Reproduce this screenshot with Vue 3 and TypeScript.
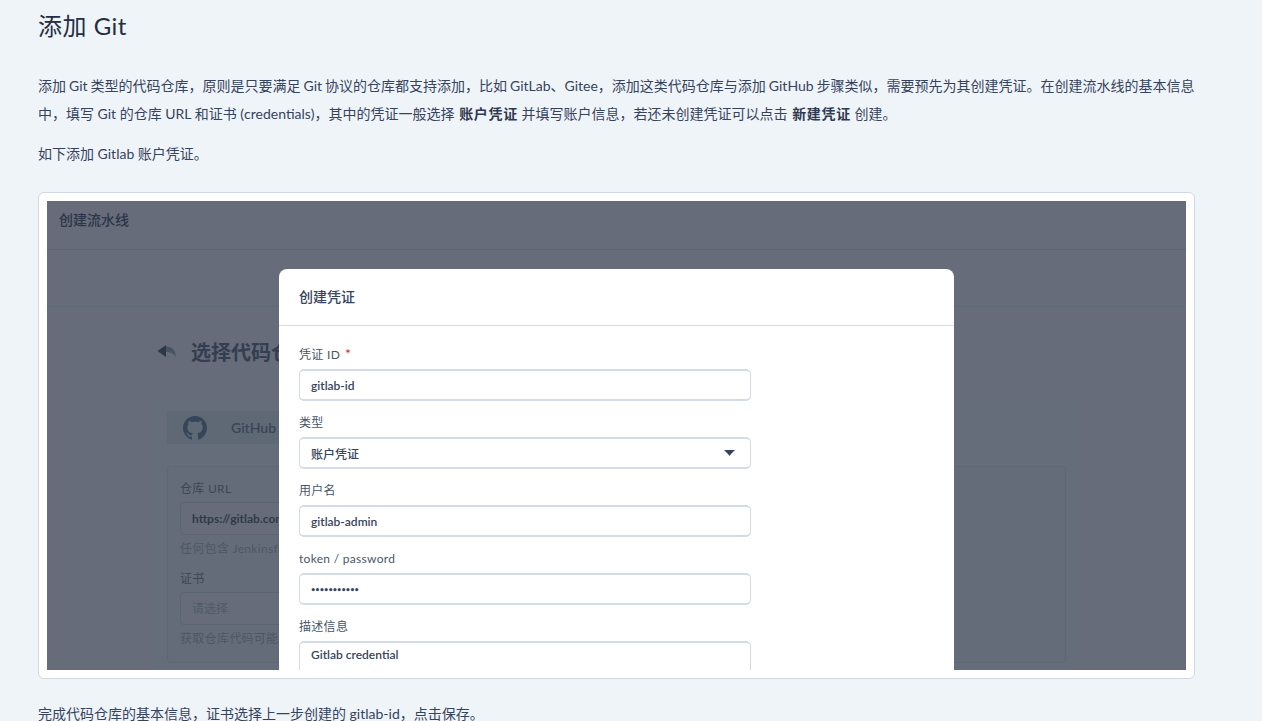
<script setup lang="ts">
interface Field {
  label: string
  value: string
  required?: boolean
  select?: boolean
  dots?: boolean
  multi?: boolean
}
const fields: Field[] = [
  { label: '凭证 ID', value: 'gitlab-id', required: true },
  { label: '类型', value: '账户凭证', select: true },
  { label: '用户名', value: 'gitlab-admin' },
  { label: 'token / password', value: '•••••••••••', dots: true },
  { label: '描述信息', value: 'Gitlab credential', multi: true },
]
</script>

<template>
  <main class="page">
    <h1 class="title">添加 Git</h1>
    <p class="para first">
      添加 Git 类型的代码仓库，原则是只要满足 Git 协议的仓库都支持添加，比如 GitLab、Gitee，添加这类代码仓库与添加 GitHub 步骤类似，需要预先为其创建凭证。在创建流水线的基本信息<span class="tail">中，填写 Git 的仓库 URL 和证书 (credentials)，其中的凭证一般选择 <strong>账户凭证</strong> 并填写账户信息，若还未创建凭证可以点击 <strong>新建凭证</strong> 创建。</span>
    </p>
    <p class="para second">如下添加 Gitlab 账户凭证。</p>

    <figure class="figure">
      <div class="shot">
        <div class="bg-head">创建流水线</div>
        <div class="bg-steps"></div>
        <div class="bg-body">
          <div class="bg-title">
            <svg class="back" viewBox="0 0 20 16" width="20" height="16">
              <path d="M9 2v12L0.500 8z" fill="#2c3748" />
              <path d="M9 3.500c6 0 9.500 3.500 10 10.500-2-3.500-5-5-10-5z" fill="#465362" />
            </svg>
            <span>选择代码仓库</span>
          </div>
          <div class="bg-panel">
            <div class="bg-tab">
              <svg class="gh" viewBox="0 0 16 16" width="24" height="24">
                <path fill="#36465a" d="M8 0C3.580 0 0 3.580 0 8c0 3.540 2.290 6.530 5.470 7.590.4.070.55-.17.55-.38 0-.19-.01-.82-.01-1.490-2.010.37-2.530-.49-2.690-.94-.09-.23-.48-.94-.82-1.130-.28-.15-.68-.52-.01-.53.630-.01 1.080.58 1.230.82.720 1.210 1.870.87 2.330.66.070-.52.280-.87.510-1.070-1.780-.2-3.640-.89-3.640-3.950 0-.87.310-1.590.820-2.150-.08-.2-.36-1.020.08-2.120 0 0 .670-.21 2.200.82.640-.18 1.320-.27 2-.27s1.360.09 2 .27c1.530-1.040 2.200-.82 2.200-.82.440 1.100.160 1.920.080 2.120.510.560.820 1.270.820 2.150 0 3.070-1.870 3.750-3.650 3.950.290.250.540.730.540 1.480 0 1.070-.01 1.930-.01 2.200 0 .210.150.460.550.380A8.010 8.010 0 0 0 16 8c0-4.420-3.580-8-8-8z" />
              </svg>
              <span>GitHub</span>
            </div>
            <div class="bg-card">
              <div class="bg-label">仓库 URL</div>
              <div class="bg-input strong">https://gitlab.com/</div>
              <div class="bg-hint">任何包含 Jenkinsfile 的仓库</div>
              <div class="bg-label second-label">证书</div>
              <div class="bg-input muted">请选择</div>
              <div class="bg-hint">获取仓库代码可能需要凭证</div>
            </div>
          </div>
        </div>

        <section class="modal">
          <header class="modal-head">创建凭证</header>
          <div class="modal-body">
            <div v-for="f in fields" :key="f.label" class="field">
              <div class="label">
                {{ f.label }}<span v-if="f.required" class="req">*</span>
              </div>
              <div class="input" :class="{ dots: f.dots, multi: f.multi, cjk: f.select }">
                <span>{{ f.value }}</span>
                <svg v-if="f.select" class="caret" viewBox="0 0 11 6" width="11" height="6">
                  <path d="M0 0h11L7 4 5.500 6 4 4z" fill="#36435c" />
                </svg>
              </div>
            </div>
          </div>
        </section>
      </div>
    </figure>

    <p class="para last">完成代码仓库的基本信息，证书选择上一步创建的 gitlab-id，点击保存。</p>
  </main>
</template>

<style>
html, body { margin: 0; height: 100%; overflow: hidden; background: #eff4f9; }
</style>

<style scoped>
.page {
  box-sizing: border-box;
  height: 721px;
  overflow: hidden;
  padding: 10px 67px 0 38px;
  background: #eff4f9;
  font-family: Lato, "Noto Sans CJK SC", sans-serif;
  color: #36435c;
}
.title {
  margin: 0;
  font-size: 24px;
  line-height: 32px;
  font-weight: 400;
  letter-spacing: 0.500px;
  color: #242e42;
}
.para {
  margin: 0;
  font-size: 14px;
  line-height: 28px;
}
.first { margin-top: 30px; word-spacing: -0.600px; }
.tail { word-spacing: 0; }
.para strong {
  margin-left: 1px;
  letter-spacing: 0.700px;
  color: #2f3a50;
  font-weight: 700;
}
.second { margin-top: 12px; }
.last { margin-top: 21px; }
.figure {
  box-sizing: border-box;
  margin: 24px 0 0;
  height: 487px;
  padding: 8px;
  background: #fff;
  border: 1px solid #d1d9e3;
  border-radius: 6px;
}
.shot {
  position: relative;
  height: 469px;
  overflow: hidden;
  background: #666c79;
  color: #2f3a4b;
}
.bg-head {
  box-sizing: border-box;
  height: 49px;
  padding: 10px 12px;
  font-size: 14px;
  line-height: 17px;
  font-weight: 500;
  color: #2c3648;
  border-bottom: 1px solid #5b6673;
}
.bg-steps {
  height: 56px;
  border-bottom: 1px solid #5f6976;
}
.bg-body { padding: 0 108px 0 106px; }
.bg-title {
  display: flex;
  align-items: center;
  gap: 14px;
  height: 92px;
  padding: 0 0 4px 4px;
  box-sizing: border-box;
  font-size: 20px;
  font-weight: 700;
  color: #333e50;
}
.bg-panel {
  background: #646d79;
  padding: 12px 12px 8px 14px;
  height: 280px;
  box-sizing: border-box;
}
.bg-tab {
  display: flex;
  align-items: center;
  gap: 24px;
  width: 280px;
  height: 33px;
  padding-left: 16px;
  box-sizing: border-box;
  background: #5f6975;
  font-size: 14px;
  font-weight: 600;
  color: #394556;
}
.bg-card {
  box-sizing: border-box;
  margin-top: 22px;
  height: 197px;
  padding: 14px 12px 13px;
  border: 1px solid #5e6875;
  border-radius: 4px;
  background: #656c79;
}
.bg-label { font-size: 12px; letter-spacing: 0.300px; line-height: 16px; color: #3b4757; }
.second-label { margin-top: 14px; }
.bg-input {
  box-sizing: border-box;
  height: 33px;
  width: 300px;
  margin-top: 5px;
  padding: 0 11px;
  line-height: 31px;
  font-size: 12px;
  border: 1px solid #5b6572;
  border-radius: 4px;
  background: #666c79;
}
.strong { font-weight: 700; color: #2f3a4b; }
.muted { color: #4f5a69; }
.bg-hint { margin-top: 6px; font-size: 12px; letter-spacing: 0.300px; line-height: 16px; color: #4c5766; }
.modal {
  position: absolute;
  left: 232px;
  top: 68px;
  width: 675px;
  height: 420px;
  overflow: hidden;
  background: #fff;
  border-radius: 8px;
}
.modal-head {
  box-sizing: border-box;
  height: 57px;
  padding: 0 20px;
  line-height: 55px;
  font-size: 14px;
  font-weight: 500;
  color: #36435c;
  border-bottom: 1px solid #d9dee6;
}
.modal-body {
  padding: 20px 203px 0 20px;
  display: flex;
  flex-direction: column;
  gap: 13px;
}
.label {
  font-size: 12px;
  letter-spacing: 0.300px;
  line-height: 17px;
  height: 17px;
  color: #4a5568;
}
.req { margin-left: 5px; font-size: 14px; line-height: 1; color: #c62f2f; }
.input {
  box-sizing: border-box;
  display: flex;
  align-items: center;
  justify-content: space-between;
  height: 32px;
  margin-top: 6px;
  padding: 0 15px 0 11px;
  font-size: 12px;
  font-weight: 600;
  color: #36435c;
  background: #fff;
  border: 1px solid #d5dbe4;
  border-width: 2px 1.500px;
  border-radius: 5px;
}
.cjk { font-weight: 500; }
.dots { font-size: 7.500px; letter-spacing: 0; }
.multi { height: 60px; align-items: flex-start; padding-top: 4px; }
</style>
